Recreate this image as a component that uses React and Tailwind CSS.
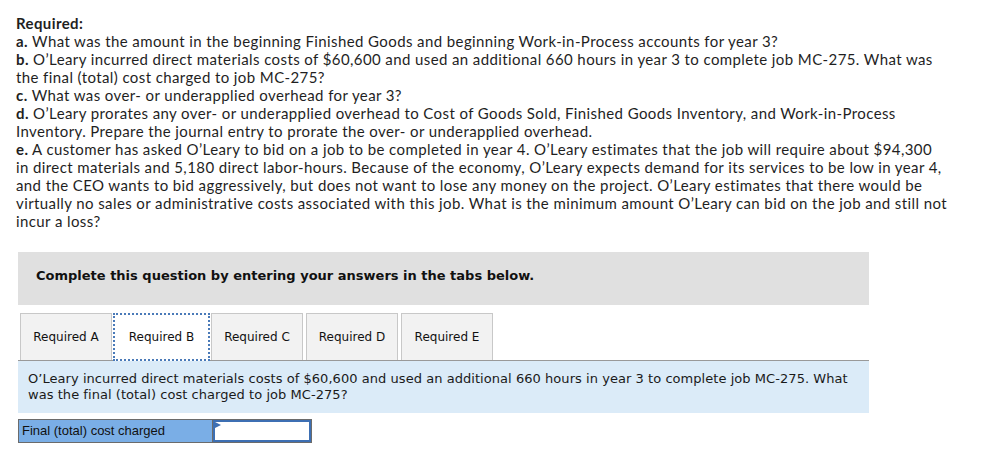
import { useState } from 'react';

const lines = [
  [null, 'Required:', true],
  ['a.', ' What was the amount in the beginning Finished Goods and beginning Work-in-Process accounts for year 3?'],
  ['b.', ' O’Leary incurred direct materials costs of $60,600 and used an additional 660 hours in year 3 to complete job MC-275. What was'],
  [null, 'the final (total) cost charged to job MC-275?'],
  ['c.', ' What was over- or underapplied overhead for year 3?'],
  ['d.', ' O’Leary prorates any over- or underapplied overhead to Cost of Goods Sold, Finished Goods Inventory, and Work-in-Process'],
  [null, 'Inventory. Prepare the journal entry to prorate the over- or underapplied overhead.'],
  ['e.', ' A customer has asked O’Leary to bid on a job to be completed in year 4. O’Leary estimates that the job will require about $94,300'],
  [null, 'in direct materials and 5,180 direct labor-hours. Because of the economy, O’Leary expects demand for its services to be low in year 4,'],
  [null, 'and the CEO wants to bid aggressively, but does not want to lose any money on the project. O’Leary estimates that there would be'],
  [null, 'virtually no sales or administrative costs associated with this job. What is the minimum amount O’Leary can bid on the job and still not'],
  [null, 'incur a loss?'],
];

const tabs = ['Required A', 'Required B', 'Required C', 'Required D', 'Required E'];

export default function App() {
  const [active, setActive] = useState(1);
  const [value, setValue] = useState('');

  return (
    <div className="w-[998px] h-[451px] bg-white overflow-hidden">
      {/* Question text */}
      <div className="pt-[14px] pl-[16px] text-[15px] leading-[18px] tracking-[0.4px] text-[#1f1f1f] font-['Lato',sans-serif] whitespace-nowrap">
        {lines.map(([lead, text, bold], i) => (
          <div key={i} className={bold ? 'font-bold' : ''}>
            {lead && <span className="font-bold">{lead}</span>}
            {text}
          </div>
        ))}
      </div>

      <div className="mt-[22px] ml-[18px] w-[851px] font-['DejaVu_Sans',Verdana,sans-serif]">
        {/* Instruction banner */}
        <div className="h-[53px] bg-[#e0e0e0] flex items-center pl-[18px] pb-[5px] text-[13px] font-bold text-[#111]">
          Complete this question by entering your answers in the tabs below.
        </div>

        {/* Tabs */}
        <div className="mt-[8px] flex pl-[2px] gap-[3px] border-b border-[#999] h-[48px] items-stretch">
          {tabs.map((t, i) => (
            <button
              key={t}
              onClick={() => setActive(i)}
              className={
                i === active
                  ? 'w-[97px] -mx-[2px] -mt-[1px] bg-white border-2 border-dotted border-[#4a7ab8] text-[12px] text-[#111] relative top-[1px]'
                  : 'w-[92px] bg-[#f2f2f2] border border-[#c8c8c8] border-b-0 text-[12px] text-[#111]'
              }
            >
              {t}
            </button>
          ))}
        </div>

        {/* Question panel */}
        <div className="h-[52px] bg-[#dbebf8] pl-[10px] pt-[10px] text-[13px] leading-[16px] tracking-[0.05px] text-[#1a1a1a] whitespace-nowrap">
          <div>O’Leary incurred direct materials costs of $60,600 and used an additional 660 hours in year 3 to complete job MC-275. What</div>
          <div>was the final (total) cost charged to job MC-275?</div>
        </div>

        {/* Answer row */}
        <div className="mt-[6px] flex h-[24px] font-['Liberation_Sans',Arial,sans-serif]">
          <div className="w-[194px] bg-[#7aaee6] border border-[#6b6b6b] border-r-0 flex items-center pl-[3px] text-[13px] text-[#111]">
            Final (total) cost charged
          </div>
          <div className="w-[100px] border border-[#6b6b6b] bg-white p-0">
            <div className="relative h-full border-2 border-[#3d6fb3]">
              <svg className="absolute left-0 top-0" width="6" height="6" viewBox="0 0 6 6">
                <path d="M0 0 L6 3 L0 6 Z" fill="#3d6fb3" />
              </svg>
              <input
                value={value}
                onChange={(e) => setValue(e.target.value)}
                className="w-full h-full outline-none bg-transparent text-[13px] px-1"
              />
            </div>
          </div>
        </div>
      </div>
    </div>
  );
}
